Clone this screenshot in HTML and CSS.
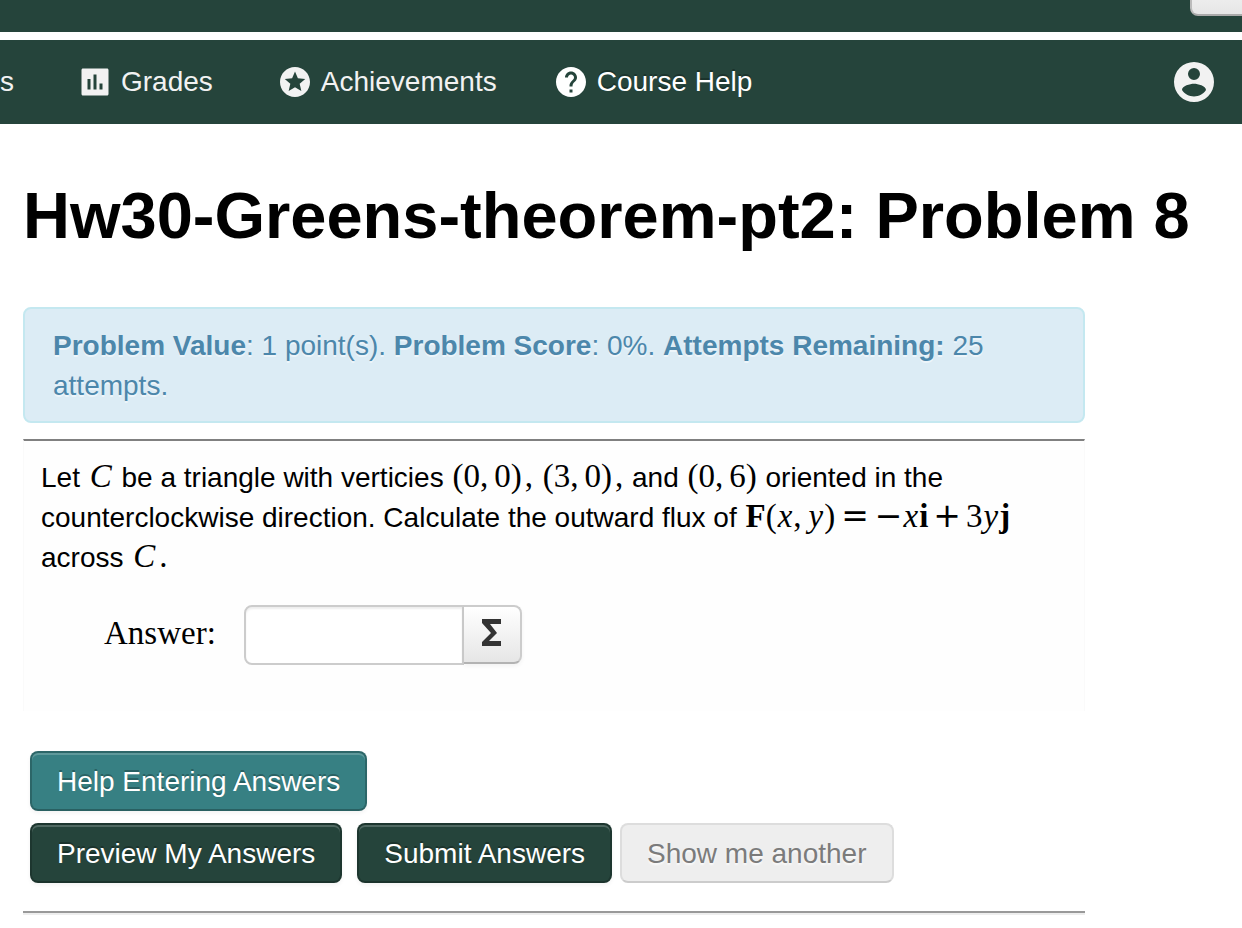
FILE: index.html
```
<!DOCTYPE html>
<html lang="en">
<head>
<meta charset="utf-8">
<title>Hw30-Greens-theorem-pt2: Problem 8</title>
<link rel="stylesheet" href="styles.css">
</head>
<body>
<header class="banner">
  <button class="banner-button" type="button" aria-label="Menu">
    <svg viewBox="0 0 24 24" aria-hidden="true"><path d="M6 8h12l-6 7z"/></svg>
  </button>
</header>
<nav class="navbar">
  <a class="nav-item nav-item-first" href="#">s</a>
  <a class="nav-item nav-item-grades" href="#">
    <svg class="nav-icon" viewBox="0 0 24 24" aria-hidden="true"><path d="M20 3H4c-.6 0-1 .4-1 1v16c0 .6.4 1 1 1h16c.6 0 1-.4 1-1V4c0-.6-.4-1-1-1zM9 17H7v-7h2v7zm4 0h-2V7h2v10zm4 0h-2v-4h2v4z"/></svg>
    <span>Grades</span>
  </a>
  <a class="nav-item nav-item-achievements" href="#">
    <svg class="nav-icon" viewBox="0 0 24 24" aria-hidden="true"><path d="M11.990 2C6.470 2 2 6.480 2 12s4.470 10 9.990 10C17.520 22 22 17.520 22 12S17.520 2 11.990 2zm4.240 16L12 15.450 7.770 18l1.120-4.810-3.730-3.230 4.920-.42L12 5l1.920 4.530 4.920.42-3.730 3.230L16.230 18z"/></svg>
    <span>Achievements</span>
  </a>
  <a class="nav-item nav-item-help" href="#">
    <svg class="nav-icon" viewBox="0 0 24 24" aria-hidden="true"><path d="M12 2C6.480 2 2 6.480 2 12s4.480 10 10 10 10-4.480 10-10S17.520 2 12 2zm1 17h-2v-2h2v2zm2.070-7.750l-.9.920C13.450 12.900 13 13.500 13 15h-2v-.5c0-1.100.45-2.100 1.170-2.830l1.240-1.260c.37-.36.59-.86.59-1.410 0-1.100-.9-2-2-2s-2 .9-2 2H8c0-2.210 1.790-4 4-4s4 1.790 4 4c0 .88-.36 1.680-.93 2.250z"/></svg>
    <span>Course Help</span>
  </a>
  <a class="nav-item account" href="#" aria-label="Account">
    <svg class="account-icon" viewBox="0 0 24 24" aria-hidden="true"><path fill-rule="evenodd" d="M12 2a10 10 0 1 0 0 20 10 10 0 0 0 0-20zM12 5a3 3 0 1 1 0 6 3 3 0 0 1 0-6zM12 19.200c-2.500 0-4.710-1.280-6-3.220.03-1.990 4-3.080 6-3.080 1.990 0 5.970 1.090 6 3.080-1.290 1.940-3.500 3.220-6 3.220z"/></svg>
  </a>
</nav>
<main class="page">
  <h1 class="title">Hw30-Greens-theorem-pt2: Problem 8</h1>
  <form class="content">
    <div class="alert">
      <b>Problem Value</b>: 1 point(s). <b>Problem Score</b>: 0%. <b>Attempts Remaining:</b> 25 attempts.
    </div>
    <section class="problem">
      <p class="statement">Let <span class="math"><i>C</i></span> be a triangle with verticies <span class="math">(0,<span class="thin"></span>0)<span class="comma">,</span></span> <span class="math">(3,<span class="thin"></span>0)<span class="comma">,</span></span> and <span class="math">(0,<span class="thin"></span>6)</span> oriented in the counterclockwise direction. Calculate the outward flux of <span class="math"><b>F</b>(<i>x</i>,<span class="thin"></span><i>y</i>)<span class="op rel">=</span><span class="op">−</span><i>x</i><b>i</b><span class="op bin">+</span>3<i>y</i><b>j</b></span> across <span class="math"><i>C</i><span class="comma">.</span></span></p>
      <div class="answer">
        <label class="answer-label" for="answer">Answer:</label>
        <input class="answer-input" id="answer" type="text">
        <button class="answer-button" type="button" aria-label="Equation editor">
          <svg viewBox="0 0 19 27" aria-hidden="true"><path d="M0 0h19v5H8l7 9-8 8h12v5H0v-4l9-9-9-10z"/></svg>
        </button>
      </div>
    </section>
    <div class="actions">
      <button class="btn btn-help" type="button">Help Entering Answers</button>
      <div class="action-row">
        <button class="btn btn-primary" type="button">Preview My Answers</button>
        <button class="btn btn-primary" type="button">Submit Answers</button>
        <button class="btn btn-disabled" type="button" disabled>Show me another</button>
      </div>
    </div>
    <hr class="rule">
  </form>
</main>
</body>
</html>
```
FILE: styles.css
```
* { box-sizing: border-box; }
body {
  margin: 0;
  overflow-x: hidden;
  background: #fff;
  color: #000;
  font: 28px/40px "Liberation Sans", Arial, sans-serif;
}
.banner {
  display: flex;
  justify-content: flex-end;
  align-items: flex-end;
  height: 32px;
  padding-bottom: 16px;
  background: #25443b;
  overflow: hidden;
}
.banner-button {
  flex: none;
  width: 84px;
  height: 60px;
  margin-right: -32px;
  padding: 0 0 0 44px;
  border: 2px solid #bbb;
  border-bottom-color: #aaa;
  border-radius: 8px;
  background: linear-gradient(#fff, #e6e6e6);
}
.banner-button svg { display: block; width: 24px; }
.navbar {
  display: flex;
  align-items: center;
  height: 84px;
  margin-top: 8px;
  padding-right: 24px;
  background: #25443b;
}
.nav-item {
  display: flex;
  align-items: center;
  gap: 8px;
  color: #f2f2f2;
  text-decoration: none;
  white-space: nowrap;
}
.nav-item-grades { margin-left: 63px; }
.nav-item-achievements { margin-left: 64px; }
.nav-item-help { margin-left: 56px; color: #fff; text-shadow: 0 -2px 0 rgba(0, 0, 0, .25); }
.nav-icon { width: 36px; height: 36px; fill: currentColor; }
.account { margin-left: auto; }
.account-icon { width: 48px; height: 48px; fill: currentColor; }
.page { padding: 52px 24px 12px 23px; }
.title {
  margin: 0 0 51px;
  font-size: 65px;
  line-height: 80px;
  white-space: nowrap;
}
.content { max-width: 1062px; }
.alert {
  margin-bottom: 16px;
  padding: 17px 70px 15px 28px;
  border: 2px solid #c4e8f0;
  border-radius: 8px;
  background: #dcecf5;
  color: #4c87ab;
  text-shadow: 0 2px 0 rgba(255, 255, 255, .5);
}
.problem {
  min-height: 272px;
  padding: 17px;
  border: 1px solid #fafafa;
  border-top: 2px solid #808080;
  border-bottom: 0;
  background: #fefefe;
}
.statement { margin: 0; }
.math {
  margin: 0 1px;
  font-family: "Liberation Serif", "Times New Roman", serif;
  font-size: 33px;
  line-height: 1;
  white-space: nowrap;
}
.math i { margin: 0 1px; }
.thin { margin-left: 6px; }
.comma { margin-left: 3px; }
.op { font-family: "DejaVu Sans", sans-serif; line-height: 0; }
.rel { margin: 0 6px; }
.bin { margin: 0 5px; }
.answer { display: flex; align-items: flex-start; margin: 27px 0 0 63px; }
.answer-label {
  margin: 8px 28px 0 0;
  font: 33px/40px "Liberation Serif", "Times New Roman", serif;
}
.answer-input {
  width: 220px;
  height: 60px;
  padding: 8px 12px;
  border: 2px solid #ccc;
  border-radius: 8px 0 0 8px;
  background: #fff;
  box-shadow: inset 0 2px 2px rgba(0, 0, 0, .07);
  font: 28px/40px "Liberation Sans", Arial, sans-serif;
}
.answer-button {
  display: flex;
  justify-content: center;
  align-items: center;
  width: 58px;
  height: 59px;
  padding: 0 0 4px;
  border: 2px solid #ccc;
  border-left: 0;
  border-bottom-color: #b3b3b3;
  border-radius: 0 8px 8px 0;
  background: linear-gradient(#fff, #e6e6e6);
  box-shadow: 0 2px 4px rgba(0, 0, 0, .05);
}
.answer-button svg { width: 19px; height: 27px; fill: #333; }
.actions {
  display: flex;
  flex-direction: column;
  align-items: flex-start;
  gap: 12px;
  margin-top: 40px;
  padding-left: 7px;
}
.action-row { display: flex; }
.btn {
  height: 60px;
  padding: 9px 25px 7px;
  border: 2px solid rgba(0, 0, 0, .2);
  border-bottom-color: rgba(0, 0, 0, .25);
  border-radius: 8px;
  box-shadow: inset 0 2px 0 rgba(255, 255, 255, .2), 0 2px 4px rgba(0, 0, 0, .05);
  color: #fff;
  font: 28px/40px "Liberation Sans", Arial, sans-serif;
  text-shadow: 0 -2px 0 rgba(0, 0, 0, .25);
  white-space: nowrap;
}
.btn-help { background: #378083; }
.btn-primary { margin-right: 15px; background: #25443b; }
.btn-primary + .btn-primary { margin-right: 8px; }
.btn-disabled {
  border-color: #ddd #ddd #ccc;
  background: #eee;
  box-shadow: none;
  color: #7b7b7b;
  text-shadow: 0 2px 2px rgba(255, 255, 255, .75);
}
.rule {
  margin: 28px 0 0;
  border: 0;
  border-top: 2px solid #999;
  border-bottom: 2px solid #eee;
}
```
